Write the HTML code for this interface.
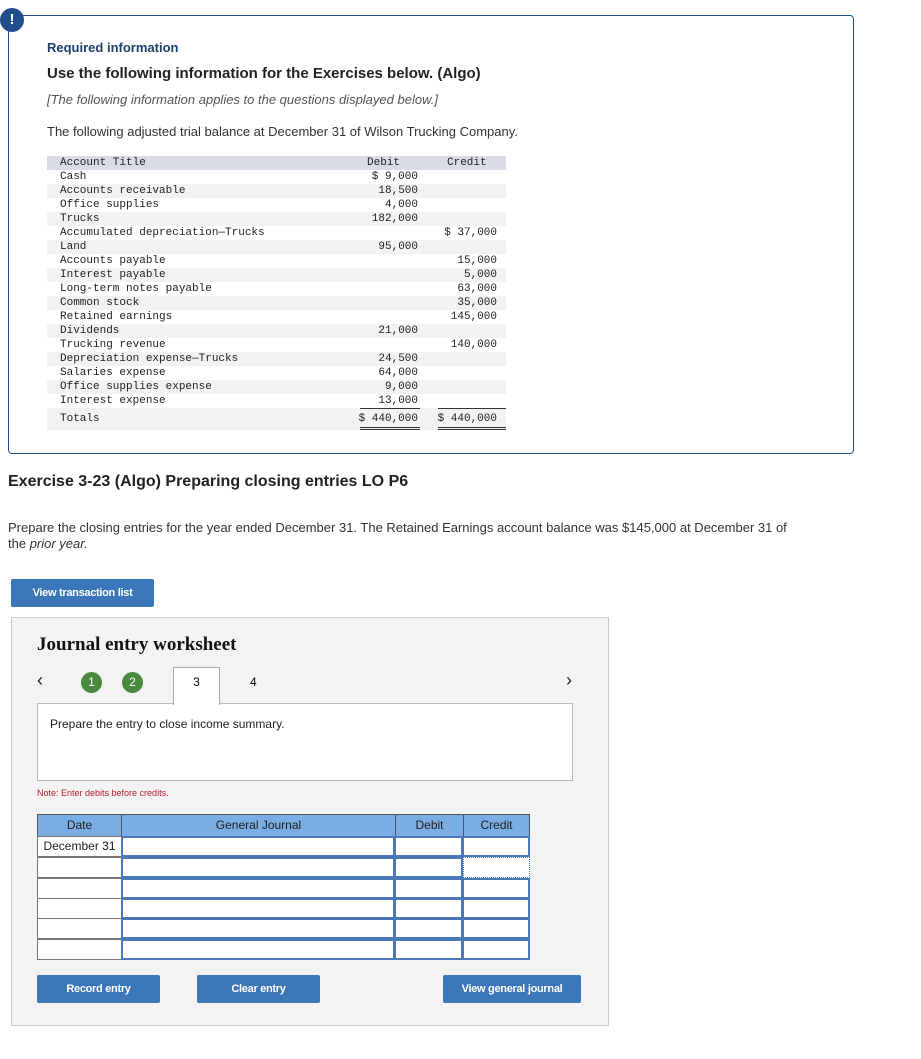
<!DOCTYPE html>
<html><head><meta charset="utf-8"><style>
body{margin:0;width:921px;height:1059px;background:#fff;font-family:"Liberation Sans",sans-serif;position:relative;overflow:hidden}
.a{position:absolute;box-sizing:border-box}
.box{left:8px;top:15px;width:846px;height:439px;border:1px solid #1f4e8c;border-radius:4px}
.ic{left:0;top:8px;width:24px;height:24px;border-radius:50%;background:#1f4e8c;color:#fff;font-weight:bold;font-size:15px;text-align:center;line-height:24px}
.tb{left:47px;width:459px;font-family:"Liberation Mono",monospace;font-size:11px;color:#222}
.r{position:absolute;left:0;width:459px;height:14px;line-height:14px}
.r span{position:absolute}
.t{left:13px}.d{right:88px}.c{right:9px}
.btn{background:#3a76b8;color:#fff;font-weight:bold;font-size:11px;text-align:center;border-radius:2px;letter-spacing:-0.3px}
.h{background:#7aade3;border:1px solid #555;font-size:12px;text-align:center;line-height:20px;color:#222}
.dc{background:#fff;border:1px solid #777;font-size:12px;text-align:center;line-height:19px;color:#222}
.in{background:#fff;border:2px solid #4a79b5}
</style></head><body>
<div class="a box"></div>
<div class="a ic">!</div>
<div class="a" style="left:47px;top:40px;font-size:13px;font-weight:bold;color:#1f3f6e">Required information</div>
<div class="a" style="left:47px;top:65px;font-size:15px;font-weight:bold;color:#222">Use the following information for the Exercises below. (Algo)</div>
<div class="a" style="left:47px;top:92px;font-size:13px;font-style:italic;color:#555">[The following information applies to the questions displayed below.]</div>
<div class="a" style="left:47px;top:124px;font-size:13px;color:#333">The following adjusted trial balance at December 31 of Wilson Trucking Company.</div>
<div class="a tb" style="top:156px;height:276px">
<div class="r" style="top:0;background:#d9dce6"><span class="t">Account Title</span><span style="left:320px">Debit</span><span style="left:400px">Credit</span></div>
<div class="r" style="top:14px"><span class="t">Cash</span><span class="d">$ 9,000</span></div>
<div class="r" style="top:28px;background:#f2f2f2"><span class="t">Accounts receivable</span><span class="d">18,500</span></div>
<div class="r" style="top:42px"><span class="t">Office supplies</span><span class="d">4,000</span></div>
<div class="r" style="top:56px;background:#f2f2f2"><span class="t">Trucks</span><span class="d">182,000</span></div>
<div class="r" style="top:70px"><span class="t">Accumulated depreciation—Trucks</span><span class="c">$ 37,000</span></div>
<div class="r" style="top:84px;background:#f2f2f2"><span class="t">Land</span><span class="d">95,000</span></div>
<div class="r" style="top:98px"><span class="t">Accounts payable</span><span class="c">15,000</span></div>
<div class="r" style="top:112px;background:#f2f2f2"><span class="t">Interest payable</span><span class="c">5,000</span></div>
<div class="r" style="top:126px"><span class="t">Long-term notes payable</span><span class="c">63,000</span></div>
<div class="r" style="top:140px;background:#f2f2f2"><span class="t">Common stock</span><span class="c">35,000</span></div>
<div class="r" style="top:154px"><span class="t">Retained earnings</span><span class="c">145,000</span></div>
<div class="r" style="top:168px;background:#f2f2f2"><span class="t">Dividends</span><span class="d">21,000</span></div>
<div class="r" style="top:182px"><span class="t">Trucking revenue</span><span class="c">140,000</span></div>
<div class="r" style="top:196px;background:#f2f2f2"><span class="t">Depreciation expense—Trucks</span><span class="d">24,500</span></div>
<div class="r" style="top:210px"><span class="t">Salaries expense</span><span class="d">64,000</span></div>
<div class="r" style="top:224px;background:#f2f2f2"><span class="t">Office supplies expense</span><span class="d">9,000</span></div>
<div class="r" style="top:238px"><span class="t">Interest expense</span><span class="d">13,000</span></div>
<div class="r" style="top:252px;height:22px;line-height:22px;background:#f2f2f2"><span class="t">Totals</span><span class="d">$ 440,000</span><span class="c">$ 440,000</span></div>
<div class="a" style="left:313px;top:252px;width:60px;border-top:1px solid #333"></div>
<div class="a" style="left:313px;top:271px;width:60px;border-top:3px double #333"></div>
<div class="a" style="left:391px;top:252px;width:68px;border-top:1px solid #333"></div>
<div class="a" style="left:391px;top:271px;width:68px;border-top:3px double #333"></div>
</div>
<div class="a" style="left:8px;top:473px;font-size:16px;font-weight:bold;color:#222">Exercise 3-23 (Algo) Preparing closing entries LO P6</div>
<div class="a" style="left:8px;top:520px;width:797px;font-size:13px;color:#333;line-height:16px">Prepare the closing entries for the year ended December 31. The Retained Earnings account balance was $145,000 at December 31 of the <i>prior year.</i></div>
<div class="a btn" style="left:11px;top:579px;width:143px;height:28px;line-height:28px">View transaction list</div>
<div class="a" style="left:11px;top:617px;width:598px;height:409px;background:#f3f3f3;border:1px solid #ccc"></div>
<div class="a" style="left:37px;top:634px;font-family:'Liberation Serif',serif;font-size:19px;font-weight:bold;color:#111">Journal entry worksheet</div>
<div class="a" style="left:37px;top:670px;font-size:18px;color:#222">&lsaquo;</div>
<div class="a" style="left:566px;top:670px;font-size:18px;color:#222">&rsaquo;</div>
<div class="a" style="left:81px;top:672px;width:21px;height:21px;border-radius:50%;background:#4a8a3e;color:#fff;font-size:12px;text-align:center;line-height:21px">1</div>
<div class="a" style="left:122px;top:672px;width:21px;height:21px;border-radius:50%;background:#4a8a3e;color:#fff;font-size:12px;text-align:center;line-height:21px">2</div>
<div class="a" style="left:173px;top:667px;width:47px;height:38px;background:#fff;border:1px solid #aaa;border-bottom:none;font-size:12px;text-align:center;line-height:28px;z-index:2">3</div>
<div class="a" style="left:250px;top:675px;font-size:12px">4</div>
<div class="a" style="left:37px;top:703px;width:536px;height:78px;background:#fff;border:1px solid #bbb"></div>
<div class="a" style="left:50px;top:717px;font-size:12px;color:#222">Prepare the entry to close income summary.</div>
<div class="a" style="left:37px;top:788px;font-size:9px;color:#b3202a">Note: Enter debits before credits.</div>

<div class="a h" style="left:37px;top:814px;width:85px;height:23px">Date</div>
<div class="a h" style="left:121px;top:814px;width:275px;height:23px">General Journal</div>
<div class="a h" style="left:395px;top:814px;width:69px;height:23px">Debit</div>
<div class="a h" style="left:463px;top:814px;width:67px;height:23px">Credit</div>

<div class="a dc" style="left:37px;top:836px;width:85px;height:21px">December 31</div>
<div class="a in" style="left:121px;top:836px;width:274px;height:21px"></div>
<div class="a in" style="left:394px;top:836px;width:69px;height:21px"></div>
<div class="a in" style="left:462px;top:836px;width:68px;height:21px"></div>

<div class="a dc" style="left:37px;top:857px;width:85px;height:21px"></div>
<div class="a in" style="left:121px;top:857px;width:274px;height:21px"></div>
<div class="a in" style="left:394px;top:857px;width:69px;height:21px"></div>
<div class="a" style="left:463px;top:857px;width:67px;height:21px;background:#fff;border:1px dotted #4a79b5"></div>

<div class="a dc" style="left:37px;top:878px;width:85px;height:21px"></div>
<div class="a in" style="left:121px;top:878px;width:274px;height:21px"></div>
<div class="a in" style="left:394px;top:878px;width:69px;height:21px"></div>
<div class="a in" style="left:462px;top:878px;width:68px;height:21px"></div>

<div class="a dc" style="left:37px;top:898px;width:85px;height:21px"></div>
<div class="a in" style="left:121px;top:898px;width:274px;height:21px"></div>
<div class="a in" style="left:394px;top:898px;width:69px;height:21px"></div>
<div class="a in" style="left:462px;top:898px;width:68px;height:21px"></div>

<div class="a dc" style="left:37px;top:918px;width:85px;height:21px"></div>
<div class="a in" style="left:121px;top:918px;width:274px;height:21px"></div>
<div class="a in" style="left:394px;top:918px;width:69px;height:21px"></div>
<div class="a in" style="left:462px;top:918px;width:68px;height:21px"></div>

<div class="a dc" style="left:37px;top:939px;width:85px;height:21px"></div>
<div class="a in" style="left:121px;top:939px;width:274px;height:21px"></div>
<div class="a in" style="left:394px;top:939px;width:69px;height:21px"></div>
<div class="a in" style="left:462px;top:939px;width:68px;height:21px"></div>

<div class="a btn" style="left:37px;top:975px;width:123px;height:28px;line-height:28px">Record entry</div>
<div class="a btn" style="left:197px;top:975px;width:123px;height:28px;line-height:28px">Clear entry</div>
<div class="a btn" style="left:443px;top:975px;width:138px;height:28px;line-height:28px">View general journal</div>
</body></html>
